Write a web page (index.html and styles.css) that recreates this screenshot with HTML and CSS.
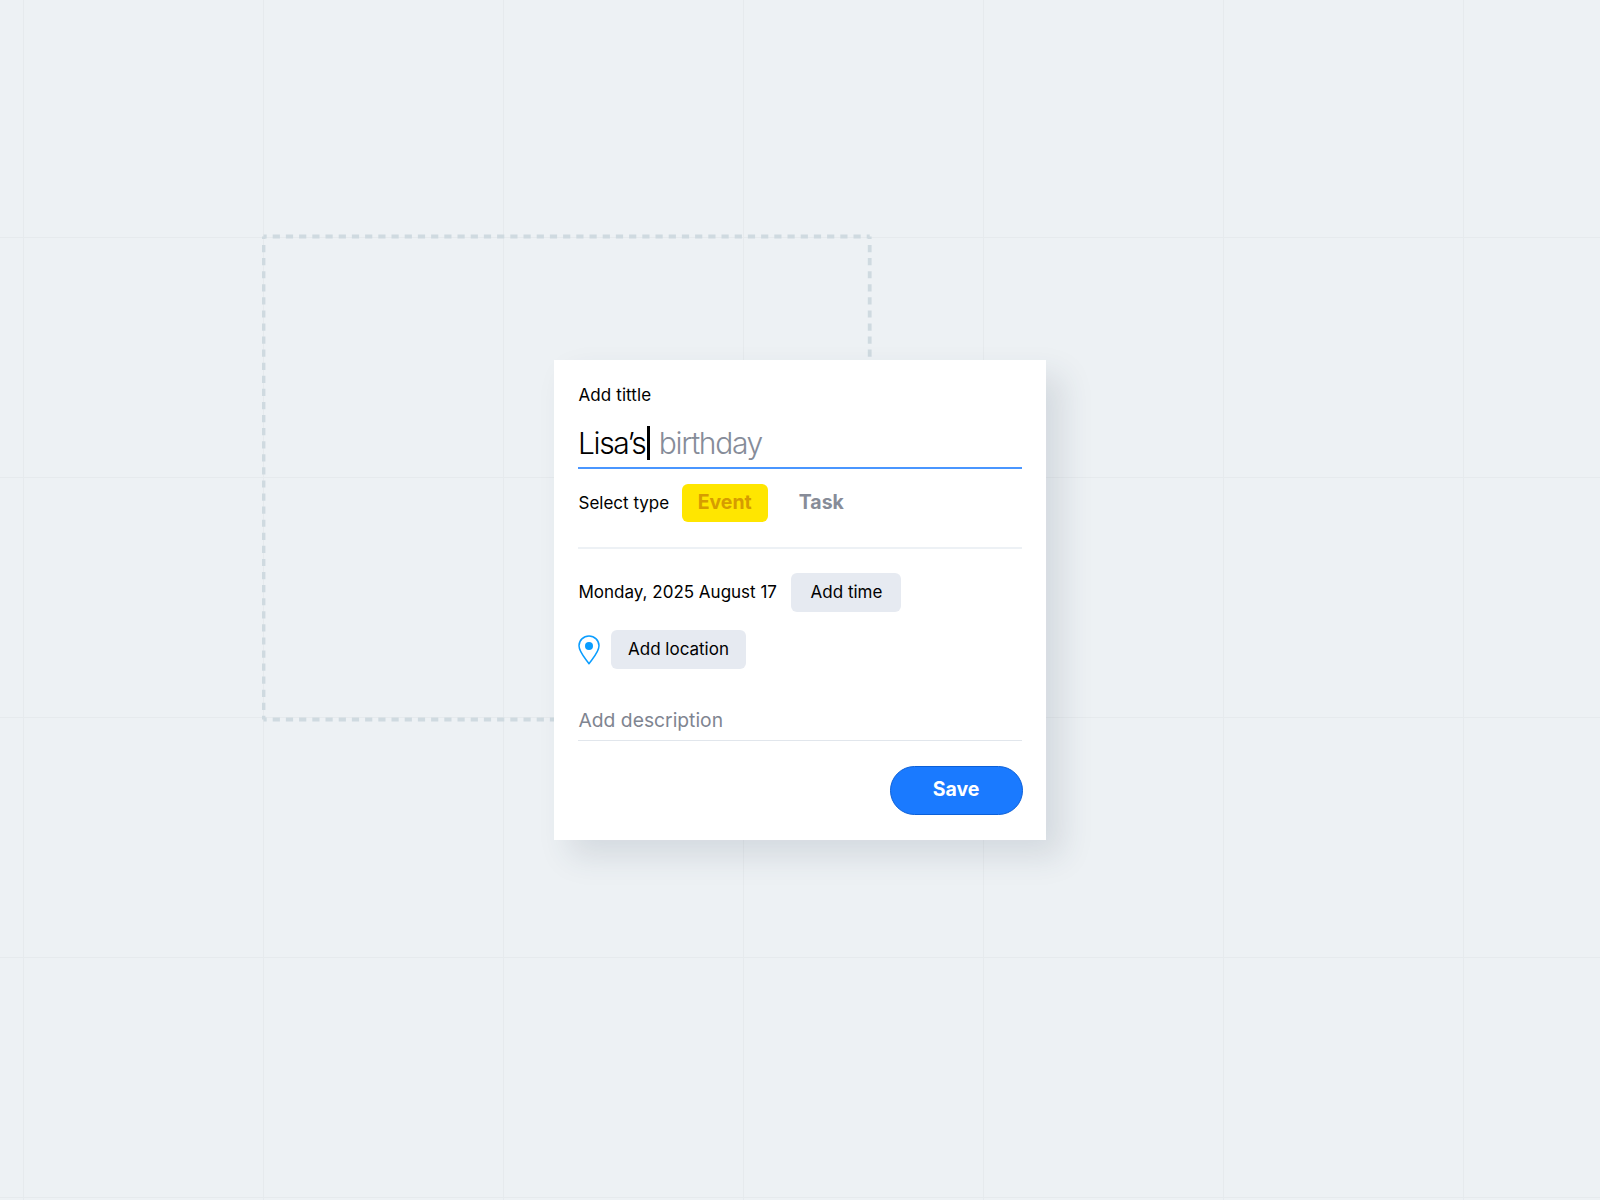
FILE: index.html
```html
<!DOCTYPE html>
<html lang="en">
<head>
<meta charset="utf-8">
<title>Add event</title>
<link rel="stylesheet" href="styles.css">
</head>
<body>
<main class="canvas">
  <svg class="drop-zone" width="616" height="492" viewBox="0 0 616 492" aria-hidden="true">
    <path class="dash dash-h" d="M1.500 2.500H607.700"/>
    <path class="dash dash-h" d="M1.500 485.500H607.700"/>
    <path class="dash dash-v" d="M1.500 2.500V485.500"/>
    <path class="dash dash-v" d="M607.700 2.500V485.500"/>
  </svg>
  <form class="card">
    <div class="label">Add tittle</div>
    <div class="title-input">
      <span class="typed">Lisa’s</span><span class="caret"></span><span class="ghost">birthday</span>
    </div>
    <div class="type-row">
      <span class="type-label">Select type</span>
      <span class="tab tab-active">Event</span>
      <span class="tab">Task</span>
    </div>
    <div class="date-row">
      <span class="date">Monday, 2025 August 17</span>
      <span class="chip chip-time">Add time</span>
    </div>
    <div class="location-row">
      <svg class="pin" width="22" height="30" viewBox="0 0 22 30" aria-hidden="true">
        <path class="pin-outline" d="M11 1C5.4 1 1 5.4 1 10.8c0 6.3 6.4 12.7 10 17.9 3.6-5.2 10-11.6 10-17.9C21 5.4 16.600 1 11 1z"/>
        <circle class="pin-dot" cx="11" cy="11" r="4"/>
      </svg>
      <span class="chip chip-location">Add location</span>
    </div>
    <div class="description">Add description</div>
    <div class="actions">
      <button type="button" class="save">Save</button>
    </div>
  </form>
</main>
</body>
</html>
```
FILE: styles.css
```css
* { box-sizing: border-box; }
html, body { margin: 0; padding: 0; }
body { font-family: Inter, "Noto Sans", sans-serif; color: #000; }

.canvas {
  position: relative;
  width: 1600px;
  height: 1200px;
  overflow: hidden;
  display: flex;
  align-items: center;
  justify-content: center;
  background-color: #edf1f4;
  background-image:
    linear-gradient(to right, #e6eaed 0, #e6eaed 1px, transparent 1px),
    linear-gradient(to bottom, #e6eaed 0, #e6eaed 1px, transparent 1px);
  background-size: 240px 240px;
  background-position: 23px 237px;
}

.drop-zone { position: absolute; left: 262px; top: 234px; }
.dash { fill: none; stroke: #cfdae0; stroke-width: 3.8; }
.dash-h { stroke-dasharray: 7.2 6; stroke-dashoffset: 4; }
.dash-v { stroke-dasharray: 7.2 5.88; stroke-dashoffset: 4.6; }

.card {
  position: relative;
  width: 492px;
  height: 480px;
  padding: 24px 24px 0;
  background: #fff;
  box-shadow: 16px 16px 30px rgba(50, 65, 85, 0.13);
  display: flex;
  flex-direction: column;
}

.label { font-size: 17px; line-height: 20px; letter-spacing: 0.1px; padding: 1px 0 0 0.5px; height: 20px; }

.title-input {
  margin-top: 16px;
  height: 49px;
  display: flex;
  align-items: center;
  border-bottom: 2px solid #4a96ff;
  font-size: 30px;
  font-weight: 350;
  letter-spacing: -1.4px;
  padding-bottom: 1px;
}
.caret { width: 2.5px; height: 34px; background: #000; margin: 0 9px 0 2px; }
.ghost { color: #868c99; font-weight: 300; letter-spacing: -1.3px; }

.type-row { margin-top: 15px; display: flex; align-items: center; padding-bottom: 25px; border-bottom: 2px solid #edf1f5; }
.type-label { font-size: 17px; margin-right: 12.5px; padding-left: 0.5px; }
.tab {
  height: 38px;
  padding: 0 16px;
  display: flex;
  align-items: center;
  font-size: 19.500px;
  font-weight: 700;
  color: #878c98;
  border-radius: 6px;
  padding-bottom: 3px;
}
.tab-active { background: #ffe600; color: #d69c00; margin-right: 15px; }

.date-row { margin-top: 24px; display: flex; align-items: center; }
.date { font-size: 17px; margin-right: 14.5px; padding: 0 0 1px 0.5px; }
.chip {
  display: flex;
  align-items: center;
  justify-content: center;
  height: 39px;
  padding-bottom: 1px;
  background: #e6eaf1;
  border-radius: 6px;
  font-size: 17px;
}
.chip-time { width: 110px; }
.location-row { margin-top: 18px; display: flex; align-items: center; }
.pin { margin-right: 11px; }
.pin-outline { fill: none; stroke: #0a9dff; stroke-width: 1.5; stroke-linejoin: round; }
.pin-dot { fill: #0a9dff; }
.chip-location { width: 135px; }

.description {
  margin-top: 23px;
  height: 49px;
  padding: 14px 0 0 0.5px;
  font-size: 19.300px;
  line-height: 28px;
  color: #7f8591;
  border-bottom: 1px solid #e1e6ec;
}

.actions { margin-top: 25px; display: flex; justify-content: flex-end; }
.save {
  width: 133px;
  height: 49px;
  margin-right: -1px;
  border-radius: 25px;
  border: 1px solid #0c60d8;
  background: #1a7aff;
  color: #fff;
  font: 700 19.500px Inter, "Noto Sans", sans-serif;
  padding: 0 1px 3px 0;
}
```
